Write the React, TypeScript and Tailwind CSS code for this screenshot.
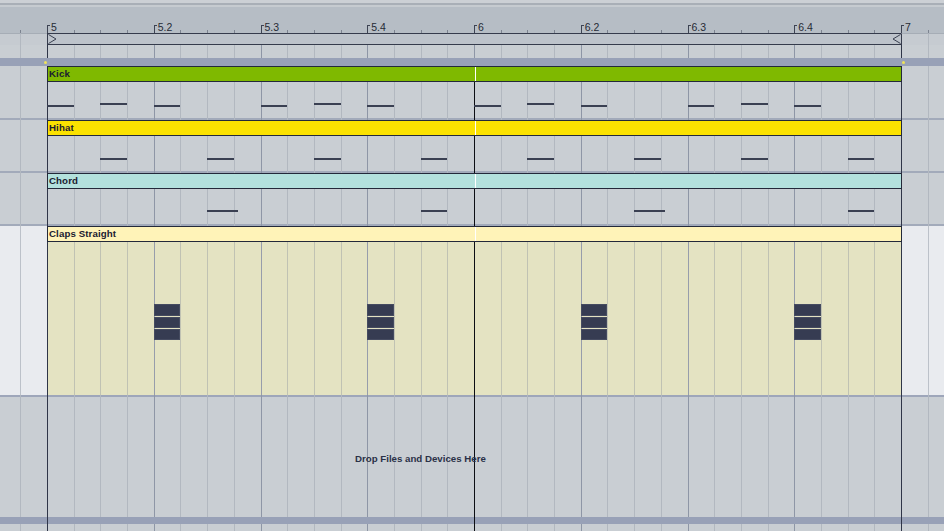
import React from "react";

const N = 32;
type Variant = "gray" | "claps" | "strip";

function lineClass(i: number, variant: Variant, blackMid: boolean) {
  if (i === 0) return "border-[#2f3548]";
  if (i === 16 && blackMid) return "border-[#0c0e14]";
  if (variant === "strip") return "border-transparent";
  if (variant === "claps") return i % 4 === 0 ? "border-[#979dab]" : "border-[#c0c2b3]";
  return i % 4 === 0 ? "border-[#8e96a6]" : "border-[#b2b8c0]";
}

function sideLine(variant: Variant) {
  if (variant === "strip") return "border-transparent";
  if (variant === "claps") return "border-[#bcc1c9]";
  return "border-[#b2b8c0]";
}

function GridRow({
  h,
  bg,
  sideBg,
  variant = "gray",
  blackMid = true,
  notes = {},
}: {
  h: string;
  bg: string;
  sideBg: string;
  variant?: Variant;
  blackMid?: boolean;
  notes?: Record<number, React.ReactNode>;
}) {
  return (
    <div className={`flex ${h}`}>
      <div className={`w-[20px] ${sideBg}`} />
      <div className={`w-[27px] border-l ${sideLine(variant)} ${sideBg}`} />
      <div className={`flex w-[854px] ${bg}`}>
        {Array.from({ length: N }, (_, i) => (
          <div key={i} className={`flex-1 min-w-0 border-l ${lineClass(i, variant, blackMid)}`}>
            {notes[i]}
          </div>
        ))}
      </div>
      <div className={`w-[27px] border-l border-[#2f3548] ${sideBg}`} />
      <div className={`flex-1 border-l ${sideLine(variant)} ${sideBg}`} />
    </div>
  );
}

function HeaderRow({ label, color, sideBg, light = false }: { label: string; color: string; sideBg: string; light?: boolean }) {
  const sl = light ? "border-[#bcc1c9]" : "border-[#b2b8c0]";
  return (
    <div className="flex h-[16px]">
      <div className={`w-[20px] ${sideBg}`} />
      <div className={`w-[27px] border-l ${sl} ${sideBg}`} />
      <div className={`flex w-[854px] border-l border-y border-[#23293a] ${color}`}>
        <div className="flex-1 flex items-center pl-[1px]">
          <span className="text-[9.7px] leading-none font-bold text-[#1b2030] tracking-[0.1px]">{label}</span>
        </div>
        <div className="flex-1 border-l border-white" />
      </div>
      <div className={`w-[27px] border-l border-[#23293a] ${sideBg}`} />
      <div className={`flex-1 border-l ${sl} ${sideBg}`} />
    </div>
  );
}

function SmallTick() {
  return <div className="w-px h-[3px] bg-[#7c8390]" />;
}

function BeatTick({ label }: { label: string }) {
  return (
    <div className="flex items-end">
      <div className="w-[3px] h-[8px] border-l border-t border-[#3d4353]" />
      <span className="ml-[1px] mb-[1px] text-[10.5px] leading-none text-[#262b36]">{label}</span>
    </div>
  );
}

function Ruler() {
  const labels: Record<number, string> = { 0: "5", 4: "5.2", 8: "5.3", 12: "5.4", 16: "6", 20: "6.2", 24: "6.3", 28: "6.4" };
  return (
    <div className="flex h-[26px] bg-[#b6bdc5]">
      <div className="w-[20px]" />
      <div className="w-[27px] flex items-end">
        <SmallTick />
      </div>
      <div className="flex w-[854px]">
        {Array.from({ length: N }, (_, i) => (
          <div key={i} className="flex-1 min-w-0 flex items-end">
            {labels[i] ? <BeatTick label={labels[i]} /> : <SmallTick />}
          </div>
        ))}
      </div>
      <div className="w-[27px] flex items-end">
        <BeatTick label="7" />
      </div>
      <div className="flex-1 flex items-end">
        <SmallTick />
      </div>
    </div>
  );
}

function LoopBand() {
  return (
    <div className="flex h-[12px]">
      <div className="w-[20px] bg-[#c6cbd1] border-t border-[#a6adb6]" />
      <div className="w-[27px] bg-[#c6cbd1] border-t border-l border-t-[#a6adb6] border-l-[#b2b8c0]" />
      <div className="flex w-[854px] justify-between items-center border-l border-y border-[#353b4c] bg-[#bdc3cb]">
        <svg width="9" height="10" viewBox="0 0 9 10" className="block">
          <path d="M0.5 0.5 L8 5 L0.5 9.5" fill="none" stroke="#3a4050" strokeWidth="1" />
        </svg>
        <svg width="9" height="10" viewBox="0 0 9 10" className="block">
          <path d="M8.5 0.5 L1 5 L8.5 9.5" fill="none" stroke="#3a4050" strokeWidth="1" />
        </svg>
      </div>
      <div className="w-[27px] bg-[#c6cbd1] border-t border-l border-t-[#a6adb6] border-l-[#353b4c]" />
      <div className="flex-1 bg-[#c6cbd1] border-t border-l border-t-[#a6adb6] border-l-[#b2b8c0]" />
    </div>
  );
}

function Line({ mt, wide = false }: { mt: string; wide?: boolean }) {
  return (
    <div
      className={`relative -ml-px h-[2px] bg-[#3a4052] ${mt} ${wide ? "w-[31px]" : "w-[calc(100%+1px)]"}`}
    />
  );
}

function ClapBlock() {
  return (
    <div className="relative -ml-px mt-[62px] flex flex-col gap-[1px] w-[calc(100%+1px)]">
      <div className="h-[12px] bg-[#363c52] border border-[#454b60]" />
      <div className="h-[11px] bg-[#363c52] border border-[#454b60]" />
      <div className="h-[11px] bg-[#363c52] border border-[#454b60]" />
    </div>
  );
}

export default function App() {
  const gray = "bg-[#c9ced3]";
  const light = "bg-[#e9ebef]";
  const div = "bg-[#a2aaba]";

  const kick: Record<number, React.ReactNode> = {};
  [0, 4, 8, 12, 16, 20, 24, 28].forEach((s) => (kick[s] = <Line mt="mt-[23px]" />));
  [2, 10, 18, 26].forEach((s) => (kick[s] = <Line mt="mt-[21px]" />));

  const hihat: Record<number, React.ReactNode> = {};
  [2, 6, 10, 14, 18, 22, 26, 30].forEach((s) => (hihat[s] = <Line mt="mt-[22px]" />));

  const chord: Record<number, React.ReactNode> = {
    6: <Line mt="mt-[21px]" wide />,
    14: <Line mt="mt-[21px]" />,
    22: <Line mt="mt-[21px]" wide />,
    30: <Line mt="mt-[21px]" />,
  };

  const claps: Record<number, React.ReactNode> = {};
  [4, 12, 20, 28].forEach((s) => (claps[s] = <ClapBlock />));

  return (
    <div className="w-[944px] h-[531px] overflow-hidden bg-[#c9ced3] font-['Liberation_Sans',Arial,sans-serif]">
      <div className="h-[3px] bg-[#ccd0d5]" />
      <div className="h-[2px] bg-[#a9afb7]" />
      <div className="h-[2px] bg-[#c6cbd0]" />
      <Ruler />
      <LoopBand />
      <GridRow h="h-[13px]" bg={gray} sideBg={gray} blackMid={false} />
      <div className="flex h-[8px] items-center bg-[#98a1b7]">
        <div className="w-[44px]" />
        <div className="w-[3px] h-[3px] rounded-full bg-[#efe25a]" />
        <div className="w-[855px]" />
        <div className="w-[3px] h-[3px] rounded-full bg-[#efe25a]" />
      </div>

      <HeaderRow label="Kick" color="bg-[#7fb900]" sideBg={gray} />
      <GridRow h="h-[36px]" bg={gray} sideBg={gray} notes={kick} />
      <GridRow h="h-[2px]" bg={div} sideBg={div} />

      <HeaderRow label="Hihat" color="bg-[#fbe200]" sideBg={gray} />
      <GridRow h="h-[35px]" bg={gray} sideBg={gray} notes={hihat} />
      <GridRow h="h-[2px]" bg={div} sideBg={div} />

      <HeaderRow label="Chord" color="bg-[#b3e1dd]" sideBg={gray} />
      <GridRow h="h-[35px]" bg={gray} sideBg={gray} notes={chord} />
      <GridRow h="h-[2px]" bg={div} sideBg={div} />

      <HeaderRow label="Claps Straight" color="bg-[#fff3b8]" sideBg={light} light />
      <GridRow h="h-[153px]" bg="bg-[#e4e3c2]" sideBg={light} variant="claps" notes={claps} />
      <GridRow h="h-[2px]" bg="bg-[#9ea6ba]" sideBg="bg-[#9ea6ba]" />

      <div className="relative">
        <GridRow h="h-[120px]" bg={gray} sideBg={gray} />
        <div className="absolute left-[355px] top-[57px] text-[9.7px] leading-none font-bold text-[#2a3147] whitespace-nowrap">
          Drop Files and Devices Here
        </div>
      </div>
      <GridRow h="h-[7px]" bg="bg-[#98a1b7]" sideBg="bg-[#98a1b7]" variant="strip" />
      <GridRow h="h-[7px]" bg={gray} sideBg={gray} />
    </div>
  );
}
